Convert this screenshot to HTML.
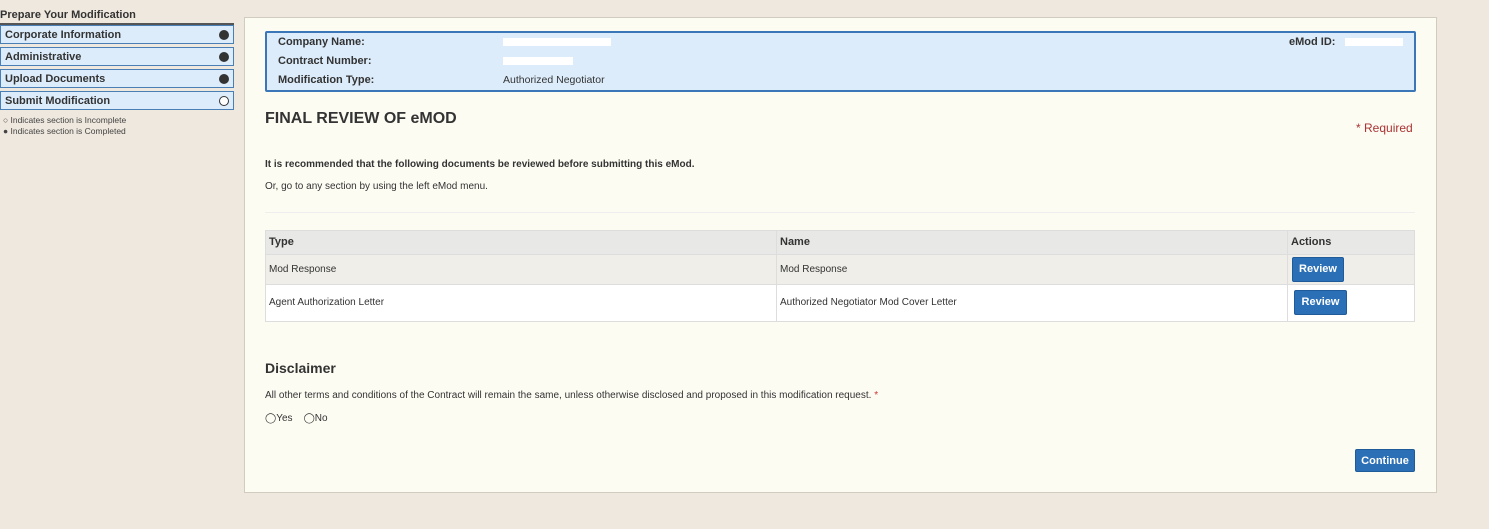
<!DOCTYPE html>
<html><head><style>
*{box-sizing:border-box;margin:0;padding:0}
body{width:1489px;height:529px;background:#efe8de;font-family:"Liberation Sans",Arial,sans-serif;position:relative;overflow:hidden;color:#333}
.a{position:absolute}
.nav{left:0;width:234px;height:19px;background:#dcecfb;border:1px solid #4a7fb5;font-weight:bold;font-size:11px;color:#333;padding:0 4px;line-height:18px}
.dot{position:absolute;right:4px;top:4px;width:10px;height:10px;border-radius:50%;background:#333}
.o{background:#fff;border:1.5px solid #333}
.panel{left:244px;top:17px;width:1193px;height:476px;background:#fdfcf3;border:1px solid #d2ccc0}
.hdr{left:265px;top:31px;width:1151px;height:61px;background:#dcecfb;border:2px solid #3a76b8;border-radius:2px}
.lb{font-size:11px;font-weight:bold;color:#333}
.tx{font-size:11px;color:#333}
.wb{background:#fff;height:8px}
.btn{background:#2b6fb6;color:#fff;font-weight:bold;font-size:11px;border:1px solid #1f5a99;border-radius:2px;text-align:center;line-height:23px}
</style></head><body>
<div class="a" style="left:0;top:9px;font-size:11px;font-weight:bold;color:#333">Prepare Your Modification</div>
<div class="a" style="left:0;top:23px;width:234px;height:2px;background:#555"></div>
<div class="a nav" style="top:25px">Corporate Information<span class="dot"></span></div>
<div class="a nav" style="top:47px">Administrative<span class="dot"></span></div>
<div class="a nav" style="top:69px">Upload Documents<span class="dot"></span></div>
<div class="a nav" style="top:91px">Submit Modification<span class="dot o"></span></div>
<div class="a" style="left:3px;top:115px;font-size:8.5px;color:#444">○ Indicates section is Incomplete</div>
<div class="a" style="left:3px;top:126px;font-size:8.5px;color:#444">● Indicates section is Completed</div>
<div class="a panel"></div>
<div class="a hdr"></div>
<div class="a lb" style="left:278px;top:36px">Company Name:</div>
<div class="a lb" style="left:278px;top:55px">Contract Number:</div>
<div class="a lb" style="left:278px;top:74px">Modification Type:</div>
<div class="a wb" style="left:503px;top:38px;width:108px"></div>
<div class="a wb" style="left:503px;top:57px;width:70px"></div>
<div class="a tx" style="left:503px;top:74px;font-size:10.5px">Authorized Negotiator</div>
<div class="a lb" style="left:1289px;top:36px">eMod ID:</div>
<div class="a wb" style="left:1345px;top:38px;width:58px"></div>
<div class="a" style="left:265px;top:110px;font-size:16px;font-weight:bold;color:#333">FINAL REVIEW OF eMOD</div>
<div class="a" style="left:1356px;top:121px;font-size:12px;color:#a33">* Required</div>
<div class="a lb" style="left:265px;top:159px;font-size:10px">It is recommended that the following documents be reviewed before submitting this eMod.</div>
<div class="a tx" style="left:265px;top:181px;font-size:10px">Or, go to any section by using the left eMod menu.</div>
<div class="a" style="left:265px;top:212px;width:1150px;height:1px;background:#eee"></div>
<div class="a" style="left:265px;top:230px;width:1150px;height:92px;border:1px solid #ddd;background:#fff"></div>
<div class="a" style="left:266px;top:231px;width:1148px;height:23px;background:#e8e8e6"></div>
<div class="a" style="left:266px;top:254px;width:1148px;height:31px;background:#efeee9;border-top:1px solid #ddd;border-bottom:1px solid #ddd"></div>
<div class="a" style="left:776px;top:231px;width:1px;height:90px;background:#ddd"></div>
<div class="a" style="left:1287px;top:231px;width:1px;height:90px;background:#ddd"></div>
<div class="a lb" style="left:269px;top:236px">Type</div>
<div class="a lb" style="left:780px;top:236px">Name</div>
<div class="a lb" style="left:1291px;top:236px">Actions</div>
<div class="a tx" style="left:269px;top:264px;font-size:10px">Mod Response</div>
<div class="a tx" style="left:780px;top:264px;font-size:10px">Mod Response</div>
<div class="a tx" style="left:269px;top:297px;font-size:10px">Agent Authorization Letter</div>
<div class="a tx" style="left:780px;top:297px;font-size:10px">Authorized Negotiator Mod Cover Letter</div>
<div class="a btn" style="left:1292px;top:257px;width:52px;height:25px">Review</div>
<div class="a btn" style="left:1294px;top:290px;width:53px;height:25px">Review</div>
<div class="a" style="left:265px;top:360px;font-size:14px;font-weight:bold;color:#333">Disclaimer</div>
<div class="a tx" style="left:265px;top:390px;font-size:10px">All other terms and conditions of the Contract will remain the same, unless otherwise disclosed and proposed in this modification request. <span style="color:#c33">*</span></div>
<div class="a tx" style="left:265px;top:413px;font-size:10px">◯Yes &nbsp;&nbsp; ◯No</div>
<div class="a btn" style="left:1355px;top:449px;width:60px;height:23px;font-size:11px">Continue</div>
</body></html>
